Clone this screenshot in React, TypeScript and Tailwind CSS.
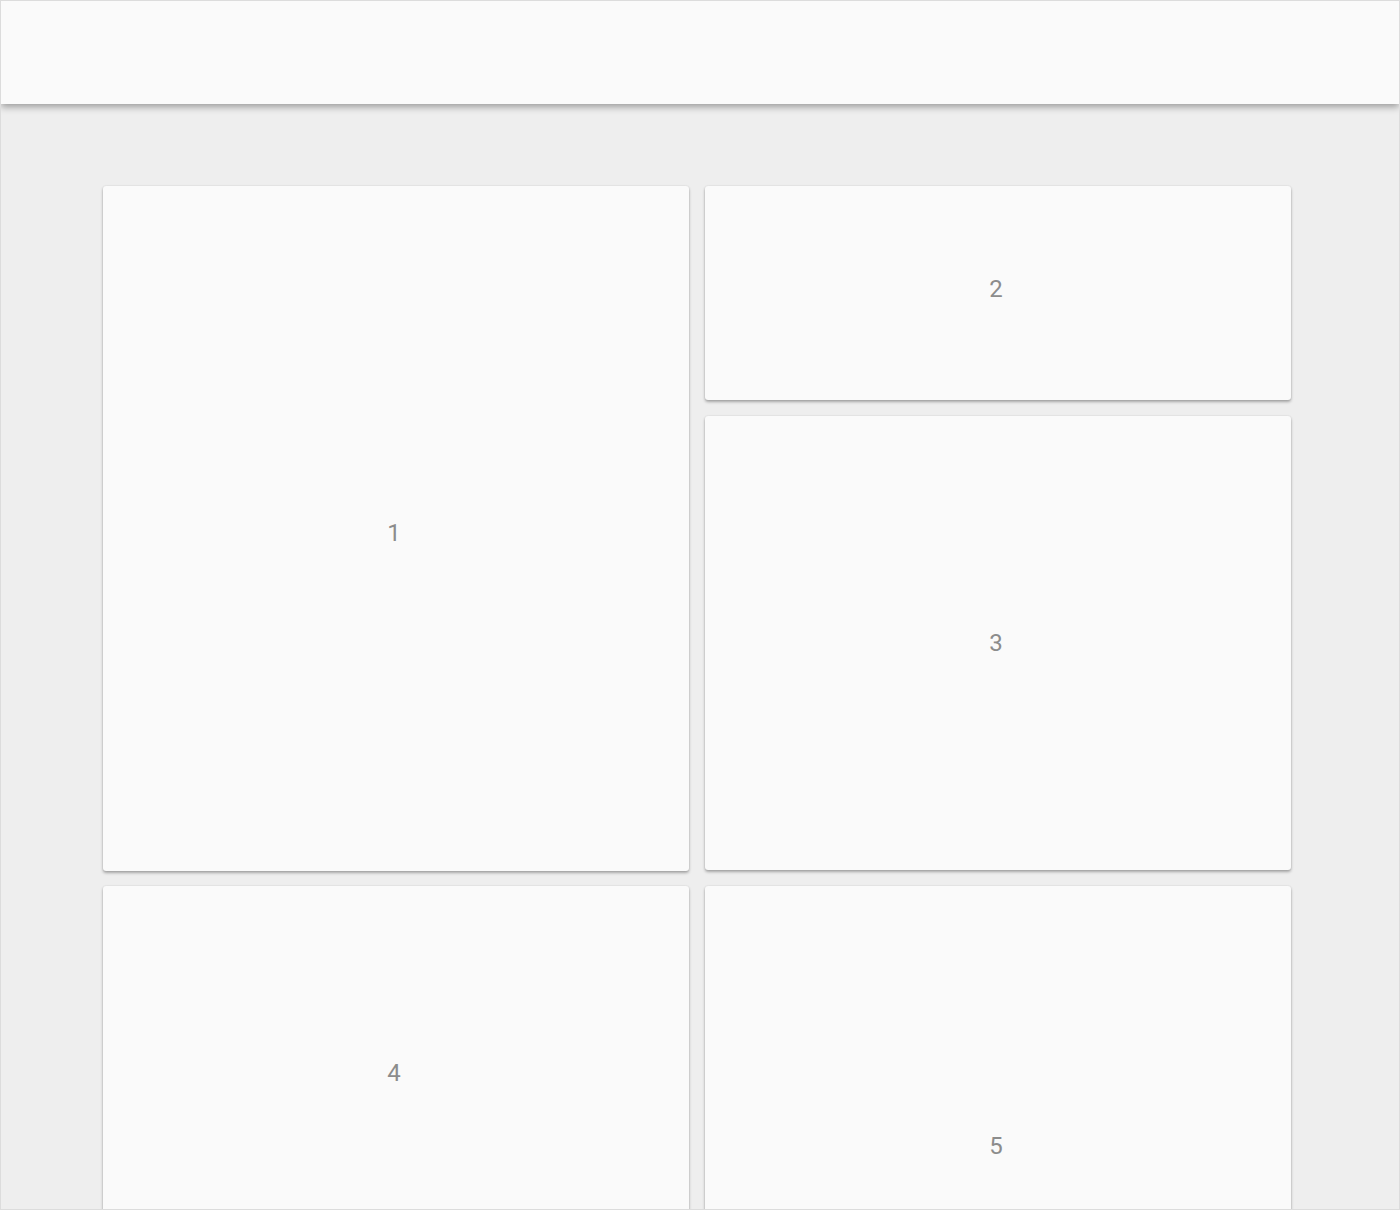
const Card = ({ label, className }: { label: string; className: string }) => (
  <div
    className={`flex items-center justify-center rounded-[3px] bg-[#fafafa] pr-[4px] text-[24px] text-[#8c8c8c] shadow-[0_2px_3px_rgba(0,0,0,0.3),0_0_2px_rgba(0,0,0,0.12)] ${className}`}
  >
    {label}
  </div>
);

export default function App() {
  return (
    <div
      className="h-[1210px] overflow-hidden border border-[#dcdcdc] bg-[#eeeeee]"
      style={{ fontFamily: "Roboto, 'Noto Sans', sans-serif" }}
    >
      {/* App bar */}
      <header className="relative z-10 h-[103px] bg-[#fafafa] shadow-[0_3px_7px_rgba(0,0,0,0.35)]" />

      {/* Grid */}
      <main className="pt-[82px] pl-[102px]">
        <div className="flex w-[1188px] gap-4">
          <div className="flex w-[586px] flex-col gap-[15px]">
            <Card label="1" className="h-[685px] pt-[8px]" />
            <Card label="4" className="h-[374px]" />
          </div>
          <div className="flex w-[586px] flex-col gap-4">
            <Card label="2" className="h-[214px] pb-[8px]" />
            <Card label="3" className="h-[454px]" />
            <Card label="5" className="h-[520px]" />
          </div>
        </div>
      </main>
    </div>
  );
}
